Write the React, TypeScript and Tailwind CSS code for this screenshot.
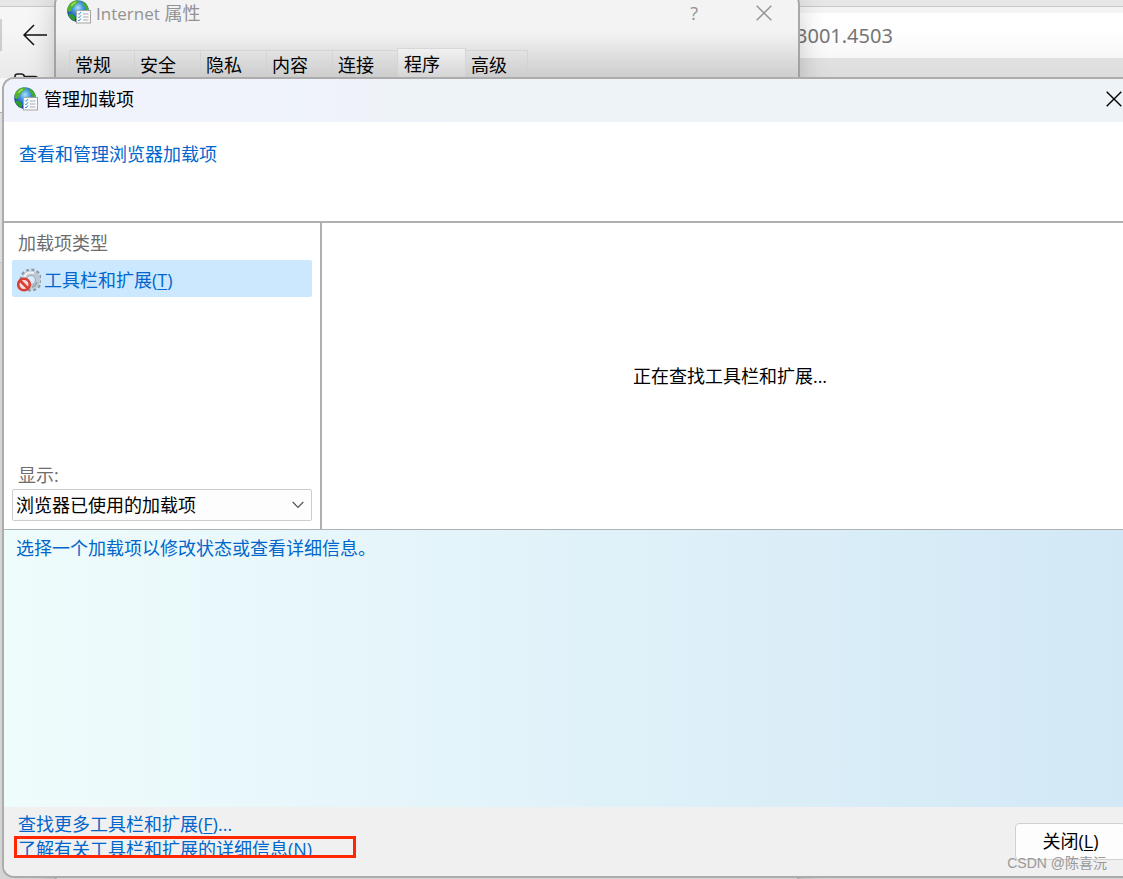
import React from "react";

const tabs = ["常规", "安全", "隐私", "内容", "连接", "程序", "高级"];
const activeTab = "程序";

const InternetIcon: React.FC<{ id: string }> = ({ id }) => (
  <svg width="24" height="24" viewBox="0 0 24 24" aria-hidden="true">
    <defs>
      <radialGradient id={id} cx="50%" cy="35%" r="60%">
        <stop offset="0" stopColor="#a9e2fa" />
        <stop offset="0.45" stopColor="#3d8edb" />
        <stop offset="1" stopColor="#15399c" />
      </radialGradient>
    </defs>
    <circle cx="11" cy="11" r="10.8" fill={`url(#${id})`} />
    <path d="M1.500 6C3.500 2.500 7 .4 10 .3L12 1.500l-1.500 2-2.500 1-1 2.500-2 1-.5 2.500-2 1.500-1.500-1C.2 9.500.6 7.500 1.500 6Z" fill="#51b52c" />
    <path d="M2 13.500l4 1 2.500 3-1 3.500C5 20 2.200 17.500 1.200 14.500Z" fill="#2c9a2c" />
    <path d="M14.500.900c3.500 1 6 4 7 7.600L21 11.500l-2.500-2-.5-3-2.500-1 .5-2.500Z" fill="#49ab2b" />
    <path d="M4 5l3.500-3 2 .5-3 2-2 2Z" fill="#b6e35b" />
    <rect x="9.500" y="10.500" width="14" height="12.500" fill="#fafafa" stroke="#a5a5a5" />
    <path d="M16 14h5.500M16 17h5.500M16 20h5.500" stroke="#a8acb3" />
    <path d="M11 13.500l1 1 2-2.500M11 16.800l1 1 2-2.500M11 20l1 1 2-2.500" stroke="#2d93d1" fill="none" />
  </svg>
);

const ExtensionIcon: React.FC = () => (
  <svg width="24" height="24" viewBox="0 0 24 24" aria-hidden="true">
    <circle cx="14" cy="12" r="10" fill="none" stroke="#8b99a6" strokeWidth="3" strokeDasharray="3 2.236" />
    <circle cx="14" cy="12" r="7" fill="none" stroke="#bfc9d1" strokeWidth="5" />
    <circle cx="14" cy="12" r="4.500" fill="#d5ebfc" stroke="#97a5b1" />
    <path d="M7 9c2-4 6-5 10-4" stroke="#eef2f4" strokeWidth="2" fill="none" />
    <path d="M20 14c-1 3-3 4.500-5 5" stroke="#8f9da9" strokeWidth="1.500" fill="none" />
    <circle cx="7" cy="16.500" r="5.800" fill="#f6dcda" stroke="#d93f36" strokeWidth="2.600" />
    <path d="M3 12.500l8 8" stroke="#d93f36" strokeWidth="2.600" />
  </svg>
);

const CloseIcon: React.FC = () => (
  <svg width="16" height="16" viewBox="0 0 16 16" fill="none" stroke="currentColor" strokeWidth="1.400" aria-hidden="true">
    <path d="M.7.700l14.600 14.600M15.300.700L.7 15.300" />
  </svg>
);

const Browser: React.FC = () => (
  <div className="h-full bg-[#d4d4d4]">
    <div className="h-[7px] border-b border-[#c9c9c9] bg-[#e7e7e7]" />
    <div className="flex h-[106px] border-b border-[#b0b0b0] bg-[#f6f6f6]">
      <div className="flex w-20 shrink-0 flex-col">
        <div className="flex h-14 items-center gap-[21px]">
          <span className="h-8 w-[2px] bg-[#cfcfcf]" />
          <button type="button" aria-label="返回">
            <svg width="24" height="22" viewBox="0 0 24 22" fill="none" stroke="#111" strokeWidth="1.500">
              <path d="M24 11H1M11 1L1 11l10 10" />
            </svg>
          </button>
        </div>
        <div className="pt-[10px] pl-[14px]">
          <svg width="25" height="20" viewBox="0 0 25 20" fill="none" stroke="#222" strokeWidth="1.600">
            <path d="M1 18V3.500Q1 1 3.500 1H7q3 0 3.500 2.500H21q2.500 0 2.500 2.500v12M1 6h6q3 0 3.500-2.500" />
          </svg>
        </div>
      </div>
      <div className="min-w-0 flex-1 bg-[#e8e8e8]">
        <div className="h-[6px] bg-[#f4f4f4]" />
        <div className="flex h-[45px] items-center bg-white pl-[716px] font-['Noto_Sans'] text-[20px] text-[#767676]">
          3001.4503
        </div>
      </div>
    </div>
    <div className="h-[150px] border-b border-[#c4c4c4] bg-[#dedede]" />
  </div>
);

const InternetProperties: React.FC = () => (
  <div className="absolute -top-2 -bottom-2 left-[54px] w-[746px] rounded-xl border-2 border-[#a8a8a8] bg-linear-to-b from-[#f3f3f3] from-[40px] to-[#d6d6d6] to-[86px] shadow-[0_8px_28px_rgba(0,0,0,0.2)]">
    <div className="flex h-[54px] items-start pt-[6px] pr-[26px] pl-[11px] text-[#929292]">
      <InternetIcon id="globe-back" />
      <h2 className="ml-[5px] flex-1 leading-[26px]">
        <span className="text-[17px]">Internet</span> 属性
      </h2>
      <button type="button" aria-label="帮助" className="mr-[58px] leading-[26px]">
        ?
      </button>
      <button type="button" aria-label="关闭 Internet 属性" className="mt-[5px]">
        <CloseIcon />
      </button>
    </div>
    <div role="tablist" className="flex items-end pl-[13px]">
      {tabs.map((tab) =>
        tab === activeTab ? (
          <button
            key={tab}
            type="button"
            role="tab"
            aria-selected="true"
            className="-ml-[2px] h-[36px] w-[69px] border border-[#dcdcdc] bg-linear-to-b from-[#f6f6f6] to-[#dcdcdc] pb-[4px] pl-[6px] text-left leading-[30px]"
          >
            {tab}
          </button>
        ) : (
          <button
            key={tab}
            type="button"
            role="tab"
            aria-selected="false"
            className="h-[34px] w-[66px] border-t border-r border-[#dadada] pb-[5px] pl-[5px] text-left leading-[28px] first:border-l last:w-[62px]"
          >
            {tab}
          </button>
        )
      )}
    </div>
  </div>
);

const AddonTypes: React.FC = () => (
  <aside className="flex w-[318px] shrink-0 flex-col border-r-2 border-[#b0b0b0] px-2 pt-[7px] pb-2">
    <h3 className="pl-[6px] leading-[26px] text-[#6d6d6d]">加载项类型</h3>
    <button
      type="button"
      className="mt-1 flex h-[37px] items-center gap-[3px] rounded-xs bg-[#cce8ff] pt-[2px] pl-[5px] text-left text-[#0066cc]"
    >
      <ExtensionIcon />
      <span className="pt-[2px]">
        工具栏和扩展(<u className="underline-offset-2">T</u>)
      </span>
    </button>
    <label htmlFor="addon-filter" className="mt-auto pl-[6px] leading-[27px] text-[#6d6d6d]">
      显示:
    </label>
    <div className="relative">
      <select
        id="addon-filter"
        className="block h-8 w-full appearance-none rounded-xs border border-[#cdcdcd] bg-[#fdfdfd] pl-[3px]"
      >
        <option>浏览器已使用的加载项</option>
      </select>
      <svg
        className="pointer-events-none absolute top-3 right-2"
        width="12"
        height="8"
        viewBox="0 0 12 8"
        fill="none"
        stroke="#555"
        strokeWidth="1.200"
      >
        <path d="M.7 1L6 6.500 11.300 1" />
      </svg>
    </div>
  </aside>
);

const ManageAddons: React.FC = () => (
  <div className="absolute top-[77px] -right-[15px] bottom-px left-[2px] flex flex-col overflow-hidden rounded-xl border-2 border-r-0 border-[#acacac] bg-white">
    <div className="flex h-[43px] shrink-0 items-center bg-linear-to-r from-[#f0f3fb] from-20% to-[#edf3f7] to-45% pr-4 pb-[3px] pl-[10px]">
      <InternetIcon id="globe-front" />
      <h1 className="ml-[6px] flex-1">管理加载项</h1>
      <button type="button" aria-label="关闭窗口">
        <CloseIcon />
      </button>
    </div>
    <div className="h-[101px] shrink-0 border-b-2 border-[#b0b0b0] pt-[18px] pl-[15px]">
      <a href="#addons" className="leading-[28px] text-[#0066cc]">
        查看和管理浏览器加载项
      </a>
    </div>
    <div className="flex h-[307px] shrink-0 border-b border-[#acb4b8]">
      <AddonTypes />
      <div className="flex flex-1 items-center justify-center">正在查找工具栏和扩展...</div>
    </div>
    <div className="min-h-0 flex-1 bg-linear-to-r from-[#effcfc] to-[#d2e8f6] pt-1 pl-3 leading-[28px] text-[#0066cc]">
      选择一个加载项以修改状态或查看详细信息。
    </div>
    <div className="flex h-[69px] shrink-0 items-start justify-between bg-[#f0f0f0] pr-3 pl-[10px] text-[#0066cc]">
      <div className="flex flex-col pt-[5px]">
        <a href="#more" className="pl-1 leading-6">
          查找更多工具栏和扩展(<u className="underline-offset-2">F</u>)...
        </a>
        <a
          href="#learn"
          className="block h-[22px] w-[342px] overflow-hidden border-[3px] border-[#ff2600] pl-px leading-5"
        >
          了解有关工具栏和扩展的详细信息(N)
        </a>
      </div>
      <button
        type="button"
        className="mt-4 h-[37px] w-[111px] rounded-sm border border-[#d0d0d0] bg-[#fdfdfd] text-black"
      >
        关闭(<u className="underline-offset-2">L</u>)
      </button>
    </div>
  </div>
);

const App: React.FC = () => {
  return (
    <div className="relative h-screen overflow-hidden font-['Open_Sans','Noto_Sans_CJK_SC',sans-serif] text-[18px] text-black">
      <Browser />
      <InternetProperties />
      {/* soft shade cast by the front window */}
      <div className="pointer-events-none absolute inset-x-0 top-7 h-[50px] bg-linear-to-b from-transparent to-black/5" />
      <ManageAddons />
      <span className="absolute right-4 bottom-[6px] font-['Liberation_Sans','Noto_Sans_CJK_SC',sans-serif] text-[14px] leading-5 text-[#999]">
        CSDN @陈喜沅
      </span>
    </div>
  );
};

export default App;
